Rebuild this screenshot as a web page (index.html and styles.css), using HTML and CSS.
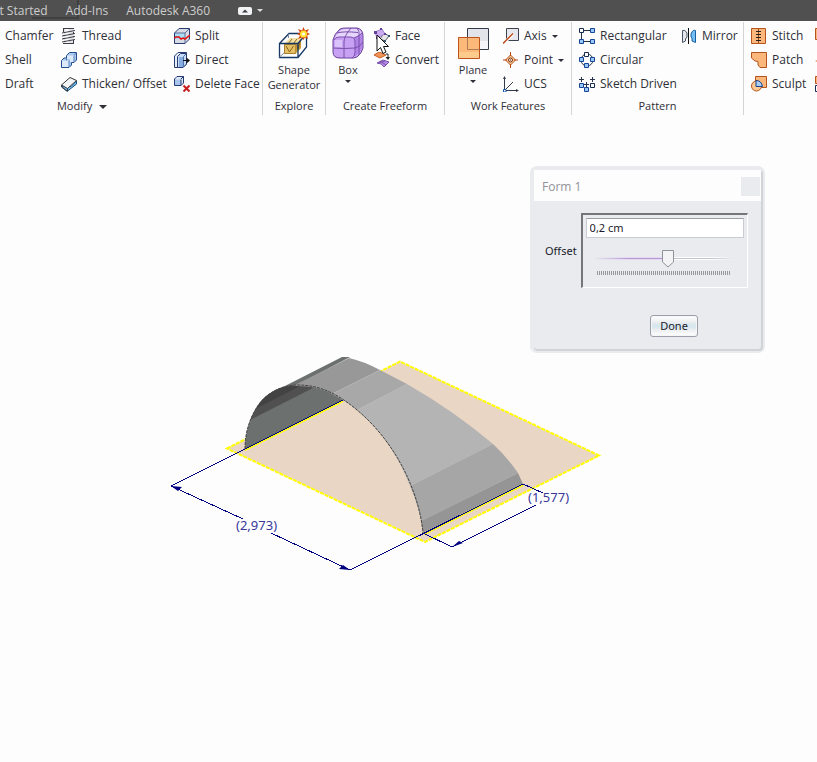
FILE: index.html
```html
<!DOCTYPE html>
<html lang="en">
<head>
    <meta charset="UTF-8">
    <meta name="viewport" content="width=device-width, initial-scale=1.0">
    <title>Form 1</title>
    <link rel="stylesheet" href="styles.css">
</head>
<body>

    <nav class="tabs">
        <a href="#" class="tab">Get Started</a>
        <a href="#" class="tab">Add-Ins</a>
        <a href="#" class="tab">Autodesk A360</a>
        <button class="collapse" aria-label="Minimize ribbon">
            <svg width="14" height="8" viewBox="0 0 14 8"><rect width="14" height="8" rx="2" fill="#f2f3f5"/><path d="M4 5.500L7 2.500L10 5.500Z" fill="#3b3f45"/></svg>
            <span class="caret"></span>
        </button>
    </nav>

    <header class="ribbon">
        <section class="panel modify">
            <div class="tools">
                <div class="column">
                    <button class="tool">Chamfer</button>
                    <button class="tool">Shell</button>
                    <button class="tool">Draft</button>
                </div>
                <div class="column">
                    <button class="tool">
                        <svg class="icon" viewBox="0 0 16 16"><path d="M3 1H13V15H3Z" fill="#e4e4e8"/><path d="M6 1V15" stroke="#fff" stroke-width="3"/><g fill="none" stroke="#3c3d45"><path d="M2 .5H13M2 15.500H13M1 5L14 2.500M1 8L14 5.500M1 11L14 8.500M1 14L14 11.500M2.500 1V4M12.500 4V6M2.500 7V8M12.500 8V9M2.500 10V11M12.500 12V15"/></g></svg>
                        Thread
                    </button>
                    <button class="tool">
                        <svg class="icon" viewBox="0 0 16 16"><path d="M5.500 3.500L8.500 .5H15.500V8L13 10.500H10.500V13L8 15.500H.5V8.500L3 6H5.500Z" fill="#a9c9ee" stroke="#234f91"/><path d="M6 3.500H13V10H9V7H6ZM1 8.500H8V15H1Z" fill="#dbe9fb"/><path d="M13 3.500L15 1M8 8.500V15M13 4V10M5.500 6V8.500" stroke="#5681bb" fill="none"/></svg>
                        Combine
                    </button>
                    <button class="tool">
                        <svg class="icon" viewBox="0 0 16 16"><path d="M.5 10L6 15.500L15.500 8V5L10 10.500Z" fill="#79bdea" stroke="#175181"/><path d="M.5 9L9 1.500L15.500 4.500L6.500 12.500Z" fill="#f3f4f6" stroke="#34363b"/><path d="M6.500 12.500V15M.5 9V11L6 15" stroke="#34363b" fill="none"/></svg>
                        Thicken/ Offset
                    </button>
                </div>
                <div class="column">
                    <button class="tool">
                        <svg class="icon" viewBox="0 0 16 16"><path d="M.5 5L5 .5H15.500V11L11 15.500H.5Z" fill="#d8dbe3" stroke="#253a73"/><path d="M1 5H11V11H1Z" fill="#a9dcf5"/><path d="M.5 5H11L15.500 .5M11 5V15.500" fill="none" stroke="#5b6f9c"/><path d="M0 10L2 9H5L7 11L9 10L11 11L16 7" fill="none" stroke="#e00d0d" stroke-width="1.500"/></svg>
                        Split
                    </button>
                    <button class="tool">
                        <svg class="icon" viewBox="0 0 16 16"><path d="M.5 4L4 .5H12.500V12L9 15.500H.5Z" fill="#e8eef8" stroke="#253a73"/><path d="M3.500 4.500L6.500 1.500H12.500V12L9 15.500H3.500Z" fill="#c8dcf5" stroke="#253a73"/><path d="M5 5H9V15H5Z" fill="#86ace0"/><path d="M9.500 4.500V15M9.500 4.500L12 2" stroke="#4d71ae"/><path d="M9 8.500H14" stroke="#111"/><path d="M12.500 5.500L16 8.500L12.500 11.500Z" fill="#111"/></svg>
                        Direct
                    </button>
                    <button class="tool">
                        <svg class="icon" viewBox="0 0 16 16"><path d="M.5 3L3 .5H9.500V7L7 9.500H.5Z" fill="#dce8f7" stroke="#253a73"/><path d="M1 3.500H7V9H1Z" fill="#a9c5eb"/><path d="M7 3.500V9.500M7 3L9.500 .5" stroke="#253a73"/><path d="M9.500 9.500L15.500 15.500M15.500 9.500L9.500 15.500" stroke="#c81e1e" stroke-width="2"/></svg>
                        Delete Face
                    </button>
                </div>
            </div>
            <h2 class="panel-title">Modify <span class="caret wide"></span></h2>
        </section>

        <section class="panel explore">
            <div class="tools">
                <button class="big-tool">
                    <svg class="big-icon" viewBox="0 0 32 32"><path d="M6 17L12 11H23V21L18 27H6Z" fill="#f3e0a4"/><path d="M6.500 17.500H17.500V26.500H6.500Z" fill="#e5bf63" stroke="#a97f2c"/><path d="M17.500 18L23 12V21L17.500 26.500Z" fill="#c99a3a"/><path d="M8 19L11.500 25L15.500 19M19 18L20 22L22 15M14 12L10 17M19 12L15 17" stroke="#8a6420" fill="none"/><path d="M1.500 16.500L11 6.500H28.500V20L20 30.500H1.500ZM1.500 16.500H20V30.500M20 16.500L28.500 6.500" fill="none" stroke="#173865" stroke-width="1.300"/><path d="M1.500 30L6 26M10.500 7V11" fill="none" stroke="#7c8ba3"/><path d="M25.500 0L27 3.500L31 2L29 5.500L32 7L29 8.500L30 12L27 10.500L25.500 13L24 10.500L20 12L22 8.500L19 7L22 5.500L20 2L24 3.500Z" fill="#d74810"/><circle cx="25.500" cy="7" r="3.500" fill="#ffe432"/><circle cx="25.500" cy="7" r="1.500" fill="#fff"/></svg>
                    Shape<br>Generator
                </button>
            </div>
            <h2 class="panel-title">Explore</h2>
        </section>

        <section class="panel freeform">
            <div class="tools">
                <button class="big-tool">
                    <svg class="big-icon" viewBox="0 0 32 32"><path d="M1 13Q2 7 8 2Q10 .8 16 1H25Q31 2 31 9V21Q30 26 25 30Q22 31.500 17 31H8Q1 31 1 25Z" fill="#c8a1f5" stroke="#684397"/><path d="M2 12Q4 7 9 3Q11 1.500 18 2H25Q29 3 29 6Q25 10 22 10H8Q4 10 2 12Z" fill="#e6d5fd"/><path d="M23 11Q27 11 30 7V21Q28 26 23 29Z" fill="#b384e8"/><path d="M3 13H10V20H3Z" fill="#dac2fb"/><path d="M2 13Q3 10 7 10H18Q23 10 23 15V25Q23 30 20 31M22 11Q28 9 30 6M5 6Q12 4 26 5.500M12 31V15Q12 9 19 1M1 21Q11 22 23 21Q28 20 31 15M27 28V8Q28 5 25 1" fill="none" stroke="#7950aa"/></svg>
                    Box
                    <span class="caret"></span>
                </button>
                <div class="column">
                    <button class="tool">
                        <svg class="icon" viewBox="0 0 16 16"><path d="M10 5L15 8L11 13L6 11Z" fill="#e6e6ea" stroke="#555b66"/><path d="M1 4L8 1L11 6L3 10Z" fill="#c9aaf2" stroke="#a284cc"/><path d="M0 3H3V6H0ZM6 0H8V2H6ZM10 5H12V7H10ZM2 9H4V11H2Z" fill="#65429a"/><path d="M14 7H16V9H14ZM10 12H12V14H10Z" fill="#38566c"/></svg>
                        Face
                    </button>
                    <button class="tool">
                        <svg class="icon" viewBox="0 0 16 16"><path d="M0 3L5 0L12 3L6 6Z" fill="#ef955b" stroke="#c95e20"/><path d="M3 11L9 8L15 10L10 15Q8 11 3 11Z" fill="#b58be6" stroke="#7952ad"/><path d="M6 9L12 13M4 11L11 9" stroke="#7952ad"/><path d="M12 2H14V6" fill="none" stroke="#222"/><path d="M11.500 5H16L14 8Z" fill="#222"/></svg>
                        Convert
                    </button>
                </div>
            </div>
            <h2 class="panel-title">Create Freeform</h2>
        </section>

        <section class="panel work">
            <div class="tools">
                <button class="big-tool">
                    <svg class="big-icon" viewBox="0 0 32 32"><path d="M10.500 1.500H31.500V22.500H10.500Z" fill="#e3e4ea" stroke="#343c4c"/><path d="M11 14H31V22H11Z" fill="#f5f5f8"/><path d="M1.500 10.500H22.500V31.500H1.500Z" fill="#fcb36f" fill-opacity=".92" stroke="#bd531b"/><path d="M2 25H22V31H2Z" fill="#fdcb8c"/><path d="M10.500 11V22.500H22" fill="none" stroke="#ae7b54"/></svg>
                    Plane
                    <span class="caret"></span>
                </button>
                <div class="column">
                    <button class="tool">
                        <svg class="icon" viewBox="0 0 16 16"><path d="M3.500 .5H15.500V12.500H3.500Z" fill="#e6e7ec" stroke="#3b4250"/><path d="M0 16L10 6" stroke="#fff" stroke-width="3"/><path d="M0 15.500L10 5.500" stroke="#b94b17" stroke-width="1.500"/></svg>
                        Axis <span class="caret"></span>
                    </button>
                    <button class="tool">
                        <svg class="icon" viewBox="0 0 16 16"><path d="M7.500 3L12.500 8L7.500 13L2.500 8Z" fill="#fed29e" stroke="#b94b17"/><path d="M7.500 0V4M7.500 12V16M0 8H4M11 8H15" stroke="#b94b17"/><circle cx="7.500" cy="8" r="2" fill="#fff0df" stroke="#702b0d"/><path d="M7 7.500H8V8.500H7Z" fill="#702b0d"/></svg>
                        Point <span class="caret"></span>
                    </button>
                    <button class="tool">
                        <svg class="icon" viewBox="0 0 16 16"><path d="M1.500 13V1M3 14.500H15M3 13L10 6" fill="none" stroke="#333b47"/><path d="M0 3L1.500 0L3 3M13 13L16 14.500L13 16" fill="#333b47"/><path d="M.5 13.500H3V16H.5Z" fill="#fff" stroke="#1757a8"/></svg>
                        UCS
                    </button>
                </div>
            </div>
            <h2 class="panel-title">Work Features</h2>
        </section>

        <section class="panel pattern">
            <div class="tools">
                <div class="column">
                    <button class="tool">
                        <svg class="icon" viewBox="0 0 16 16"><path d="M5 2.500H11M2.500 5V11M5 13.500H11" stroke="#273449"/><path d="M.5 .5H4.500V4.500H.5Z" fill="#fff" stroke="#172b4e"/><path d="M11.500 .5H15.500V4.500H11.500ZM.5 11.500H4.500V15.500H.5ZM11.500 11.500H15.500V15.500H11.500Z" fill="#9bc8fa" stroke="#154696"/></svg>
                        Rectangular
                    </button>
                    <button class="tool">
                        <svg class="icon" viewBox="0 0 16 16"><circle cx="8" cy="8" r="6" fill="none" stroke="#273449"/><path d="M5.500 .5H9.500V4.500H5.500Z" fill="#fff" stroke="#172b4e"/><path d="M.5 5.500H4.500V9.500H.5ZM11.500 5.500H15.500V9.500H11.500ZM5.500 11.500H9.500V15.500H5.500Z" fill="#9bc8fa" stroke="#154696"/></svg>
                        Circular
                    </button>
                    <button class="tool">
                        <svg class="icon" viewBox="0 0 16 16"><path d="M0 3.500H5M2.500 1V6M5 8.500H10M7.500 6V11M11 3.500H16M13.500 1V6" stroke="#273449"/><path d="M.5 7.500H4.500V11.500H.5ZM5.500 11.500H9.500V15.500H5.500Z" fill="#9bc8fa" stroke="#154696"/><path d="M11.500 7.500H15.500V11.500H11.500Z" fill="#fff" stroke="#172b4e"/></svg>
                        Sketch Driven
                    </button>
                </div>
                <div class="column">
                    <button class="tool">
                        <svg class="icon" viewBox="0 0 16 16"><path d="M1.500 2.500Q4 1 6 5V9L4.500 11V13L1.500 14.500Z" fill="#e4e6ea" stroke="#4b5666"/><path d="M14.500 2.500Q12 1 10 6V9L11 10V13L14.500 14.500Z" fill="#75bff4" stroke="#1762a3"/><path d="M7.500 0V16" stroke="#111"/></svg>
                        Mirror
                    </button>
                </div>
            </div>
            <h2 class="panel-title">Pattern</h2>
        </section>

        <section class="panel surface">
            <div class="tools">
                <div class="column">
                    <button class="tool">
                        <svg class="icon" viewBox="0 0 16 16"><path d="M.5 .5H14.500V15.500H.5Z" fill="#fbb77c" stroke="#b4531b"/><path d="M7.500 1V15" stroke="#9c4413"/><path d="M5 3.500H10M5 6.500H10M5 9.500H10M5 12.500H10" stroke="#222"/></svg>
                        Stitch
                    </button>
                    <button class="tool">
                        <svg class="icon" viewBox="0 0 16 16"><path d="M.5 .5H15.500V15.500H9L7 13V9.500L4 9L.5 6Z" fill="#fbb77c" stroke="#b4531b"/></svg>
                        Patch
                    </button>
                    <button class="tool">
                        <svg class="icon" viewBox="0 0 16 16"><path d="M4.500 .5H15.500V11.500H4.500Z" fill="#fbb77c" stroke="#b4531b"/><circle cx="5.500" cy="10" r="5" fill="#fdca94" stroke="#b4531b"/><path d="M5 4.500Q10.500 4.500 11.500 10.500H5Z" fill="#a7cff6" stroke="#1b438e"/></svg>
                        Sculpt
                    </button>
                </div>
                <div class="column">
                    <button class="tool" aria-label="Ruled Surface"><svg class="icon" viewBox="0 0 16 16"><path d="M.5 .5H15.500V11.500H.5Z" fill="#fbb77c" stroke="#b4531b"/></svg></button>
                    <button class="tool" aria-label="Trim"><svg class="icon" viewBox="0 0 16 16"><path d="M0 9L8 6V12Z" fill="#e77a3b"/></svg></button>
                    <button class="tool" aria-label="Extend"><svg class="icon" viewBox="0 0 16 16"><path d="M.5 .5H15.500V7.500H.5Z" fill="#fbb77c" stroke="#b4531b"/><path d="M.5 9.500H15.500V15.500H.5Z" fill="#fff" stroke="#172b4e"/></svg></button>
                </div>
            </div>
        </section>
    </header>

    <main class="viewport">
        <svg class="scene" viewBox="0 115 817 647" role="img" aria-label="Arched surface on a work plane">
            <clipPath id="underside">
                <path d="M245 449C245 432 250 418 257 407C265 394 280 385 298 385C316 385 330 391 343 400Z"/>
            </clipPath>

            <path class="plane" d="M227 448.500L400 361.500L599 455.500L425 542Z"/>

            <!-- underside of the arch -->
            <g clip-path="url(#underside)">
                <path fill="#6c706f" d="M240 380H350V450H240Z"/>
                <path fill="#505050" d="M240 380H330L315 387L240 425Z"/>
                <path fill="#434343" d="M240 380H312L302 385L240 417Z"/>
            </g>

            <!-- outer faces, left to right -->
            <path fill="#6c706f" d="M283 387L342 357H350L297 385Z"/>
            <path fill="#989898" d="M293 386L349 358Q363 361 380 370L332 394Q316 385 293 386Z"/>
            <path fill="#a8a8a8" d="M332 394L380 370L407 384L357 410Q346 401 332 394Z"/>
            <path fill="#b4b4b4" d="M357 410L407 384Q454 411 493 444L410 486C400 459 383 432 357 410Z"/>
            <path fill="#a6a6a6" d="M410 486L493 444Q507 457 518 473L421 521Q417 501 410 486Z"/>
            <path fill="#959595" d="M421 521L518 473L523 484L423 533Z"/>
            <path class="edge" d="M245 449C245 432 250 418 257 407C265 394 280 385 298 385C320 385 338 394 357 410C399 445 420 497 423 533"/>

            <path class="base-glow" d="M245 450L343 401M424 534L523 485"/>
            <path class="dim" d="M343 400L171 486L243 519M271 533L350 570L523 484L543 493M423 533L452 547L536 505"/>
            <path class="arrow" d="M171 486L182 487L178 491ZM350 570L339 569L343 565ZM452 547L459 541L463 543Z"/>
            <text class="dim-text" x="236" y="530">(2,973)</text>
            <text class="dim-text" x="528" y="502">(1,577)</text>
        </svg>

        <form class="dialog">
            <div class="dialog-title">
                <span>Form 1</span>
                <button type="button" class="close" aria-label="Close"></button>
            </div>
            <div class="dialog-body">
                <div class="field">
                    <label for="offset">Offset</label>
                    <div class="field-box">
                        <input type="text" id="offset" class="value" value="0,2 cm">
                        <input type="range" class="slider" aria-label="Offset" min="0" max="100" value="54">
                        <div class="ticks"></div>
                    </div>
                </div>
                <button type="button" class="done">Done</button>
            </div>
        </form>
    </main>

    <svg class="cursor" width="14" height="21" viewBox="0 0 14 21"><path d="M1 1V17L4.500 13.500L7 19.500L10 18L7.500 12.500H12.500Z" fill="#fff" stroke="#111"/></svg>

</body>
</html>
```

FILE: styles.css
```css
* {
    box-sizing: border-box;
}

body {
    display: flex;
    flex-direction: column;
    min-height: 100vh;
    margin: 0;
    background-color: #fdfdfd;
    color: #2f2f38;
    font-family: "Segoe UI", "Open Sans", sans-serif;
    font-size: 12px;
    line-height: 16px;
    overflow-x: hidden;
}

button {
    margin: 0;
    padding: 0;
    border: none;
    background: none;
    color: inherit;
    font: inherit;
    white-space: nowrap;
}

/* tab bar */
.tabs {
    position: relative;
    display: flex;
    align-items: center;
    gap: 18px;
    height: 21px;
    margin-left: -16px;
    background-color: #505050;
}

.tabs::before {
    content: "";
    position: absolute;
    left: 48px;
    top: 0;
    width: 45px;
    height: 17px;
    border-right: 2px solid #404040;
    border-bottom: 2px solid #404040;
}

.tab {
    position: relative;
    color: #cdcdcd;
    text-decoration: none;
    white-space: nowrap;
}

.collapse {
    display: flex;
    align-items: center;
    gap: 5px;
    margin-left: 10px;
    color: #ddd;
}

.caret {
    flex: none;
    border: 3px solid transparent;
    border-top-color: currentColor;
    border-bottom: none;
}

.caret.wide {
    display: inline-block;
    margin-left: 4px;
    border-width: 4px 4px 0;
    vertical-align: middle;
}

/* ribbon */
.ribbon {
    display: flex;
    height: 94px;
    padding-top: 1px;
    overflow: hidden;
}

.panel {
    display: flex;
    flex: none;
    flex-direction: column;
    justify-content: space-between;
    border-right: 1px solid #d4d4d4;
}

.modify { width: 263px; }
.explore { width: 63px; }
.freeform { width: 119px; }
.work { width: 127px; }
.pattern { width: 172px; }
.surface { width: 172px; }

.tools {
    display: flex;
    padding-top: 2px;
}

.panel-title {
    margin: 0;
    padding-bottom: 1px;
    font-size: 11px;
    font-weight: normal;
    line-height: 16px;
    text-align: center;
}

.modify .panel-title {
    padding-right: 98px;
}

.column {
    display: flex;
    flex-direction: column;
    align-items: flex-start;
}

.tool {
    display: flex;
    align-items: center;
    gap: 5px;
    height: 24px;
}

.icon {
    flex: none;
    width: 16px;
    height: 16px;
}

.modify .tools {
    display: grid;
    grid-template-columns: 56px 113px auto;
    padding-left: 5px;
}

.pattern .tools {
    display: grid;
    grid-template-columns: 102px auto;
    padding-left: 7px;
}

.surface .tools {
    display: grid;
    grid-template-columns: 64px auto;
    padding-left: 7px;
}

.big-tool {
    display: flex;
    flex-direction: column;
    align-items: center;
    padding-top: 3px;
    font-size: 11px;
    line-height: 15px;
}

.big-tool .caret {
    margin-top: 3px;
}

.big-icon {
    width: 32px;
    height: 32px;
    margin-bottom: 3px;
}

.explore .tools {
    justify-content: center;
}

.freeform .tools {
    gap: 10px;
    padding-left: 6px;
}

.work .tools {
    gap: 14px;
    padding-left: 12px;
}

/* model view */
.viewport {
    position: relative;
    flex: 1;
}

.scene {
    display: block;
    width: 100%;
}

.plane {
    fill: #ead6c4;
    stroke: #ffff00;
    stroke-width: 2;
    stroke-dasharray: 4 1;
}

.edge {
    fill: none;
    stroke: #444;
    stroke-dasharray: 3 1;
}

.base-glow {
    fill: none;
    stroke: #ffff00;
    stroke-width: 2;
}

.dim {
    fill: none;
    stroke: #000080;
    shape-rendering: crispEdges;
}

.arrow {
    fill: #000080;
}

.dim-text {
    fill: #38389a;
    font-family: "Noto Sans", sans-serif;
    font-size: 13px;
}

/* floating form */
.dialog {
    position: absolute;
    top: 55px;
    right: 56px;
    width: 227px;
    background-color: #e9ebee;
    box-shadow: 1px 1px 0 1px #d2d3d6, 0 0 0 4px #e9ebee;
    border-radius: 3px;
    color: #1b1b2b;
    font-family: Tahoma, "Noto Sans", sans-serif;
    font-size: 11px;
}

.dialog-title {
    display: flex;
    align-items: center;
    justify-content: space-between;
    height: 31px;
    padding: 2px 1px 0 8px;
    background-color: #fdfdfd;
    color: #929297;
    font-family: "Segoe UI", "Open Sans", sans-serif;
    font-size: 12px;
}

.close {
    width: 19px;
    height: 19px;
    background-color: #e9ebee;
}

.dialog-body {
    display: flex;
    flex-direction: column;
    padding: 12px 13px 12px 11px;
}

.field {
    display: flex;
    align-items: center;
    gap: 4px;
}

.field-box {
    flex: 1;
    padding: 3px;
    border: 2px solid #74767b;
    border-right: 1px solid #fff;
    border-bottom: 1px solid #fff;
}

.value {
    display: block;
    width: 100%;
    height: 20px;
    padding: 0 3px 2px;
    border: 1px solid #cacbd3;
    border-top-color: #9c9da3;
    background-color: #fff;
    color: inherit;
    font: inherit;
}

.slider {
    display: block;
    appearance: none;
    width: 140px;
    height: 18px;
    margin: 12px 0 0 7px;
    background: linear-gradient(to right, #e9ebee, #b79bd3 25%, #b79bd3 55%, #c3c4c9 56%, #c3c4c9 85%, #e9ebee) 0 8px / 100% 1px no-repeat,
        linear-gradient(to right, #e9ebee, #e5d8f2 25%, #e5d8f2 55%, #fff 56%, #fff 85%, #e9ebee) 0 7px / 100% 3px no-repeat;
}

.slider::-webkit-slider-thumb {
    appearance: none;
    width: 12px;
    height: 18px;
    background: url("data:image/svg+xml,%3Csvg xmlns='http://www.w3.org/2000/svg' width='12' height='18'%3E%3Cpath d='M.5 .5H11.500V12L6 17L.5 12Z' fill='%23f3f3f5' stroke='%23929398'/%3E%3C/svg%3E") no-repeat;
    border: none;
}

.ticks {
    width: 134px;
    height: 4px;
    margin: 3px 0 9px 11px;
    background: repeating-linear-gradient(to right, #96979c 0 1px, #e9ebee 1px 2px);
}

.done {
    align-self: center;
    width: 48px;
    height: 22px;
    margin: 27px 0 0 55px;
    border: 1px solid #9b9fab;
    border-radius: 3px;
    background: linear-gradient(#fff, #e9ebee 35%, #d9e8ef 40%, #d9e8ef 60%, #e9ebee 65%, #fff);
    box-shadow: inset 0 0 0 1px #f5f6f8;
}

/* mouse pointer lies over the ribbon */
.cursor {
    position: absolute;
    left: 376px;
    top: 34px;
}
```
